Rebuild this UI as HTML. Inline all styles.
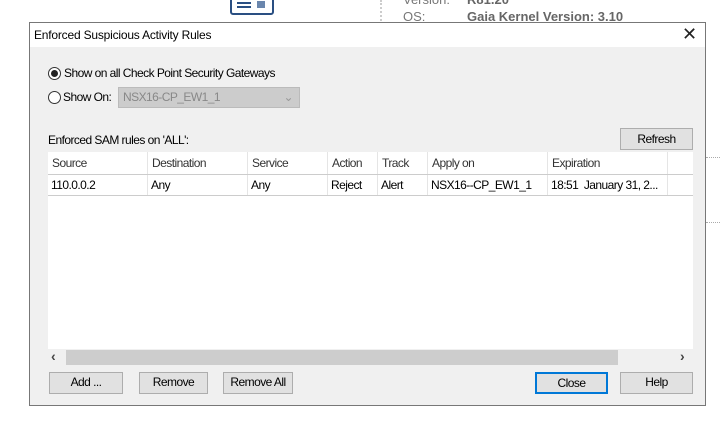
<!DOCTYPE html>
<html><head><style>
body{margin:0;width:720px;height:424px;background:#fff;position:relative;overflow:hidden;font-family:"Liberation Sans",sans-serif;font-size:12px;color:#000}
.a{position:absolute}
.dlg{letter-spacing:-0.55px}
.btn{position:absolute;background:#e1e1e1;border:1px solid #adadad;box-sizing:border-box;text-align:center;line-height:18px;font-size:12px}
.th{position:absolute;top:0;height:22px;line-height:22px;padding-left:4px;box-sizing:border-box;border-right:1px solid #e5e5e5;color:#333}
.td{position:absolute;top:23px;height:20px;line-height:20px;padding-left:3px;box-sizing:border-box;border-right:1px solid #e5e5e5;white-space:nowrap;overflow:hidden}
.rad{position:absolute;width:11px;height:11px;border:1px solid #333;border-radius:50%;background:#fff}
</style></head><body>
<div class="a" style="left:230px;top:-4px;width:40px;height:15px;border:2px solid #2a4f82;border-radius:3px;background:#fff"></div>
<div class="a" style="left:237px;top:2px;width:14px;height:2px;background:#2a4f82;box-shadow:0 4px 0 #2a4f82"></div>
<div class="a" style="left:257px;top:1px;width:8px;height:7px;background:#6a86ad"></div>
<div class="a" style="left:380px;top:0;height:24px;border-left:2px dotted #ccc"></div>
<div class="a" style="left:403px;top:-8px;color:#777;font-size:13px">Version:</div>
<div class="a" style="left:467px;top:-8px;color:#666;font-size:13px;font-weight:bold">R81.20</div>
<div class="a" style="left:403px;top:9px;color:#777;font-size:13px">OS:</div>
<div class="a" style="left:467px;top:9px;color:#666;font-size:13px;font-weight:bold">Gaia Kernel Version: 3.10</div>
<div class="a" style="left:706px;top:157px;width:14px;border-top:1px dotted #aaa"></div>
<div class="a" style="left:706px;top:222px;width:14px;border-top:1px dotted #aaa"></div>

<div class="a dlg" style="left:29px;top:22px;width:677px;height:384px;border:1px solid #777;box-sizing:border-box;background:#f0f0f0">
 <div class="a" style="left:0;top:0;width:675px;height:24px;background:#fff"></div>
 <div class="a" style="left:4px;top:5px;font-size:12px;letter-spacing:-0.2px">Enforced Suspicious Activity Rules</div>
 <div class="a" style="left:652px;top:1px;font-size:18px;font-weight:300;color:#222">✕</div>
 <div class="rad" style="left:18px;top:44px"></div><div class="a" style="left:21px;top:47px;width:7px;height:7px;border-radius:50%;background:#222"></div>
 <div class="a" style="left:34px;top:43px">Show on all Check Point Security Gateways</div>
 <div class="rad" style="left:18px;top:68px"></div>
 <div class="a" style="left:33px;top:67px">Show On:</div>
 <div class="a" style="left:88px;top:64px;width:182px;height:21px;background:#ccc;border:1px solid #bbb;box-sizing:border-box;color:#888;line-height:19px;padding-left:4px">NSX16-CP_EW1_1<span style="position:absolute;right:6px;color:#999">⌄</span></div>
 <div class="a" style="left:18px;top:110px">Enforced SAM rules on 'ALL':</div>
 <div class="btn" style="left:590px;top:105px;width:73px;height:22px;line-height:20px">Refresh</div>
 <div class="a" style="left:18px;top:129px;width:645px;height:197px;background:#fff">
  <div class="a" style="left:0;top:22px;width:645px;border-top:1px solid #ccc"></div>
  <div class="a" style="left:0;top:43px;width:645px;border-top:1px solid #ccc"></div>
  <div class="th" style="left:0;width:100px">Source</div>
  <div class="th" style="left:100px;width:100px">Destination</div>
  <div class="th" style="left:200px;width:80px">Service</div>
  <div class="th" style="left:280px;width:50px">Action</div>
  <div class="th" style="left:330px;width:50px">Track</div>
  <div class="th" style="left:380px;width:120px">Apply on</div>
  <div class="th" style="left:500px;width:120px">Expiration</div>
  <div class="td" style="left:0;width:100px">110.0.0.2</div>
  <div class="td" style="left:100px;width:100px">Any</div>
  <div class="td" style="left:200px;width:80px">Any</div>
  <div class="td" style="left:280px;width:50px">Reject</div>
  <div class="td" style="left:330px;width:50px">Alert</div>
  <div class="td" style="left:380px;width:120px">NSX16--CP_EW1_1</div>
  <div class="td" style="left:500px;width:120px">18:51&nbsp; January 31, 2...</div>
  <div class="a" style="left:0;top:197px;width:645px;height:17px;background:#f0f0f0"></div>
  <div class="a" style="left:18px;top:198px;width:552px;height:15px;background:#cdcdcd"></div>
  <div class="a" style="left:3px;top:196px;font-size:14px;color:#444;font-weight:bold">‹</div>
  <div class="a" style="left:632px;top:196px;font-size:14px;color:#444;font-weight:bold">›</div>
 </div>
 <div class="btn" style="left:19px;top:349px;width:74px;height:22px">Add ...</div>
 <div class="btn" style="left:109px;top:349px;width:69px;height:22px">Remove</div>
 <div class="btn" style="left:193px;top:349px;width:70px;height:22px">Remove All</div>
 <div class="btn" style="left:505px;top:349px;width:73px;height:22px;border:2px solid #0078d7;line-height:18px">Close</div>
 <div class="btn" style="left:590px;top:349px;width:73px;height:22px">Help</div>
</div>
</body></html>
